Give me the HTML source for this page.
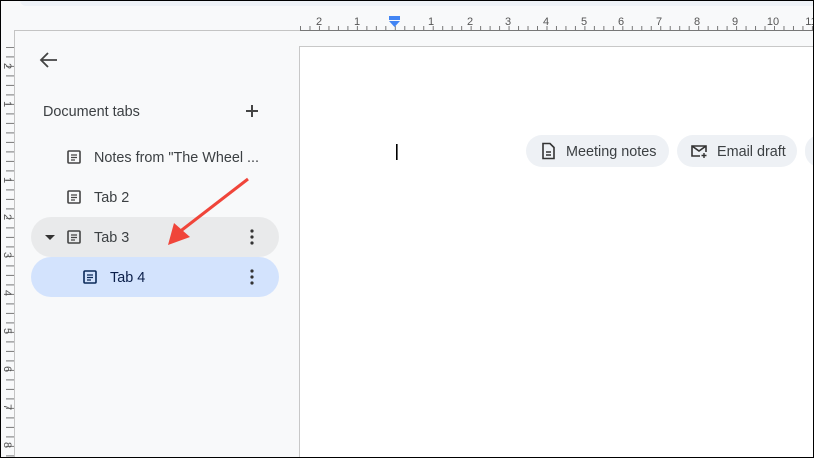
<!DOCTYPE html>
<html><head><style>
body{margin:0;width:814px;height:458px;overflow:hidden;background:#f8f9fa;font-family:"Liberation Sans",Arial,sans-serif;position:relative}
.a{position:absolute}
.item{position:absolute;left:31px;width:248px;height:40px;border-radius:20px;font-size:14.4px;color:#3c4043;display:flex;align-items:center}
.item span{padding-top:2px}
.chip{position:absolute;top:135px;height:32px;border-radius:16px;background:#eef1f5;font-size:14.4px;color:#3c4043;display:flex;align-items:center}
.chip span{padding-top:2px}
</style></head><body>
<div class="a" style="left:0;top:0;width:814px;height:458px;border:1px solid #000;box-sizing:border-box;pointer-events:none;z-index:9"></div>
<div class="a" style="left:20px;top:0;width:794px;height:6px;background:#eef2f7;border-radius:0 0 0 12px"></div>
<svg class="a" style="left:0;top:0" width="814" height="458">
<defs>
<pattern id="hp" x="300" y="0" width="9.48" height="40" patternUnits="userSpaceOnUse"><line x1="0.5" y1="26" x2="0.5" y2="30" stroke="#777"/></pattern>
<pattern id="vp" x="0" y="-0.6" width="20" height="9.5" patternUnits="userSpaceOnUse"><line x1="6" y1="0.5" x2="14" y2="0.5" stroke="#777"/></pattern>
</defs>
<rect x="300" y="20" width="514" height="10" fill="url(#hp)"/>
<line x1="14" y1="30.5" x2="814" y2="30.5" stroke="#c4c4c4"/>
<line x1="300" y1="30.5" x2="814" y2="30.5" stroke="#777"/>
<line x1="14.5" y1="30" x2="14.5" y2="458" stroke="#c4c4c4"/>
<rect x="0" y="47" width="14" height="411" fill="url(#vp)"/>
<g font-size="11" fill="#555" font-family="Liberation Sans" text-anchor="middle">
<text x="319" y="25">2</text><text x="357" y="25">1</text>
<text x="431" y="25">1</text><text x="470" y="25">2</text><text x="508" y="25">3</text><text x="546" y="25">4</text><text x="584" y="25">5</text><text x="621" y="25">6</text><text x="659" y="25">7</text><text x="697" y="25">8</text><text x="735" y="25">9</text><text x="773" y="25">10</text><text x="811" y="25">11</text>
<g transform="rotate(90)"><text x="66" y="-4">2</text><text x="104" y="-4">1</text><text x="180" y="-4">1</text><text x="217" y="-4">2</text><text x="255" y="-4">3</text><text x="293" y="-4">4</text><text x="331" y="-4">5</text><text x="369" y="-4">6</text><text x="407" y="-4">7</text><text x="445" y="-4">8</text></g>
</g>
<rect x="389" y="16" width="11" height="4" fill="#4285f4"/>
<path d="M389 21h11l-5.5 6z" fill="#4285f4"/>
<rect x="299.5" y="46.5" width="520" height="420" fill="#fff" stroke="#c8c8c8"/>
<rect x="396" y="144" width="1.6" height="16" fill="#000"/>
<path d="M57 60H42M48 53l-7 7 7 7" fill="none" stroke="#444" stroke-width="1.8"/>
<path d="M252 105v12M246 111h12" stroke="#444" stroke-width="2"/>
</svg>
<div class="a" style="left:43px;top:104px;font-size:14.4px;color:#3c4043">Document tabs</div>
<svg width="0" height="0" style="position:absolute"><symbol id="doc" viewBox="0 0 16 16"><rect x="2" y="2" width="12" height="12" rx="1" fill="none" stroke="currentColor" stroke-width="1.6"/><path d="M5 6h6M5 8.5h6M5 11h4" stroke="currentColor" stroke-width="1.3"/></symbol></svg>
<div class="item" style="top:137px;"><svg width="16" height="16" style="margin-left:35px;color:#444"><use href="#doc"/></svg><span style="margin-left:12px">Notes from "The Wheel ...</span></div>
<div class="item" style="top:177px;"><svg width="16" height="16" style="margin-left:35px;color:#444"><use href="#doc"/></svg><span style="margin-left:12px">Tab 2</span></div>
<div class="item" style="top:217px;background:#e9eaeb"><i style="margin-left:14px;width:0;height:0;border-left:5px solid transparent;border-right:5px solid transparent;border-top:5px solid #333"></i><svg width="16" height="16" style="margin-left:11px;color:#444"><use href="#doc"/></svg><span style="margin-left:12px">Tab 3</span><svg class="a" style="left:217px;top:12px" width="8" height="16"><circle cx="4" cy="2" r="1.6" fill="#333"/><circle cx="4" cy="8" r="1.6" fill="#333"/><circle cx="4" cy="14" r="1.6" fill="#333"/></svg></div>
<div class="item" style="top:257px;background:#d3e3fd;color:#0b1f4a"><svg width="16" height="16" style="margin-left:51px;color:#0b2a5a"><use href="#doc"/></svg><span style="margin-left:12px">Tab 4</span><svg class="a" style="left:217px;top:12px" width="8" height="16"><circle cx="4" cy="2" r="1.6" fill="#333"/><circle cx="4" cy="8" r="1.6" fill="#333"/><circle cx="4" cy="14" r="1.6" fill="#333"/></svg></div>
<svg class="a" style="left:160px;top:175px" width="100" height="80"><path d="M88 4L18 58" stroke="#f0453a" stroke-width="3"/><path d="M8 70L14 48L30 62Z" fill="#f0453a"/></svg>
<div class="chip" style="left:526px;width:143px"><svg width="16" height="18" style="margin-left:14px"><path d="M3 1.5h7l4 4V16.5H3z" fill="none" stroke="#333" stroke-width="1.6"/><path d="M6 10h5M6 13h5" stroke="#333" stroke-width="1.4"/></svg><span style="margin-left:10px">Meeting notes</span></div>
<div class="chip" style="left:677px;width:120px"><svg width="18" height="16" style="margin-left:13px"><path d="M10 13H2V3h14v6" fill="none" stroke="#333" stroke-width="1.6"/><path d="M2 3l7 5 7-5" fill="none" stroke="#333" stroke-width="1.6"/><path d="M14 10v5M11.5 12.5h5" stroke="#333" stroke-width="1.4"/></svg><span style="margin-left:9px">Email draft</span></div>
<div class="chip" style="left:805px;width:30px"></div>
</body></html>
